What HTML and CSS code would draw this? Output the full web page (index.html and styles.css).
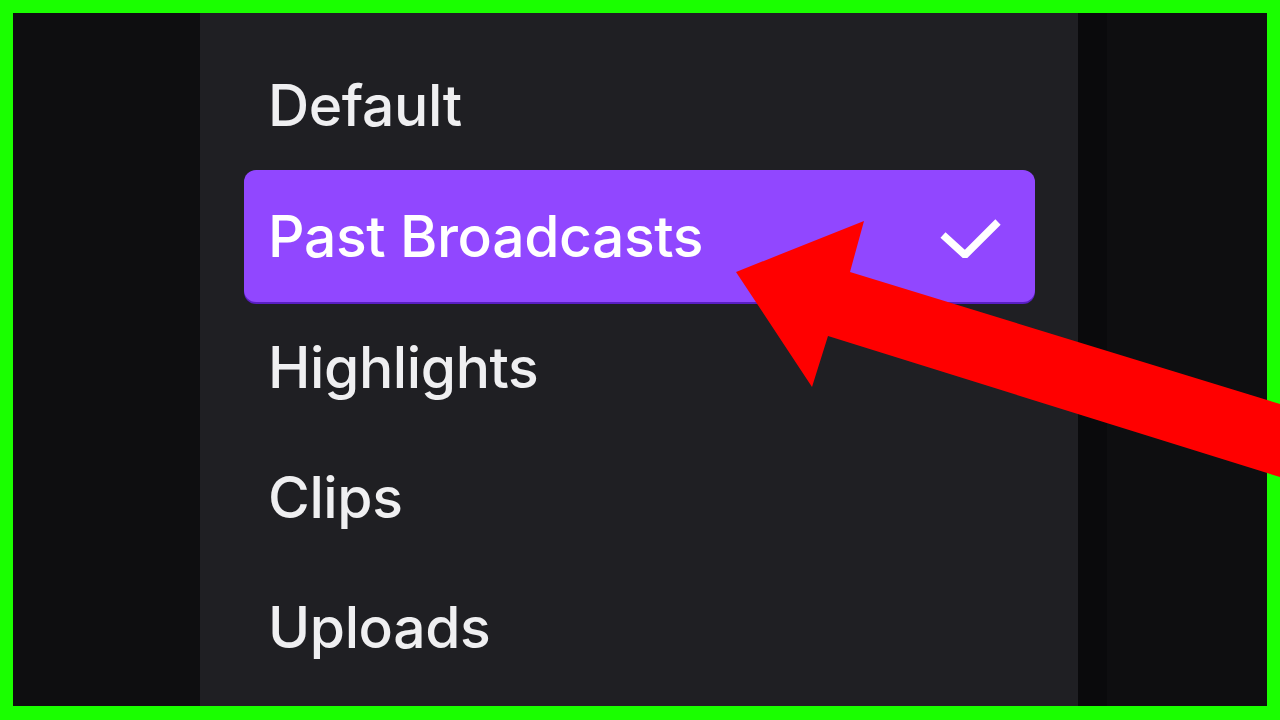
FILE: index.html
```html
<!DOCTYPE html>
<html lang="en">
<head>
  <meta charset="UTF-8" />
  <title>Filter videos</title>
  <link rel="stylesheet" href="styles.css">
</head>
<body>
  <div class="frame">
    <div class="side"></div>
    <div class="menu">
      <div class="item">Default</div>
      <div class="item selected">
        <span>Past Broadcasts</span>
        <svg class="check" width="64" height="48" viewBox="0 0 64 48">
          <polyline points="4,25 26,45 59,12" fill="none" stroke="#fff" stroke-width="7.5" />
        </svg>
      </div>
      <div class="item">Highlights</div>
      <div class="item">Clips</div>
      <div class="item">Uploads</div>
    </div>
    <div class="shade"></div>
    <div class="side"></div>
  </div>

  <svg class="arrow" width="1280" height="720" viewBox="0 0 1280 720">
    <polygon points="736,272 864,221 850,272 1280,404 1280,477 828,336 812,387" fill="#ff0000" />
  </svg>
</body>
</html>
```

FILE: styles.css
```css
* {
  box-sizing: border-box;
}

body {
  margin: 0;
  width: 1280px;
  height: 720px;
  overflow: hidden;
  font-family: 'Inter', 'Noto Sans', sans-serif;
}

.frame {
  display: flex;
  width: 1280px;
  height: 720px;
  border: 13px solid #1aff00;
  border-bottom-width: 14px;
  background: #0e0e10;
}

.side {
  flex: 1;
}

.frame .side:first-child {
  flex: 0 0 187px;
}

.menu {
  flex: 0 0 878px;
  background: #1f1f23;
  padding: 27px 43px 0 44px;
}

.shade {
  flex: 0 0 29px;
  background: #0a0a0c;
}

.item {
  height: 130px;
  display: flex;
  align-items: center;
  justify-content: space-between;
  padding: 0 24px;
  color: #efeff1;
  font-size: 57px;
  font-weight: 500;
  letter-spacing: -0.4px;
}

.item.selected {
  height: 132px;
  background: #9147ff;
  border-radius: 12px;
  box-shadow: 0 2px 0 #5a1fc4;
  color: #fff;
  padding-right: 32px;
}

.check {
  margin-top: -4px;
}

.arrow {
  position: absolute;
  top: 0;
  left: 0;
}
```
